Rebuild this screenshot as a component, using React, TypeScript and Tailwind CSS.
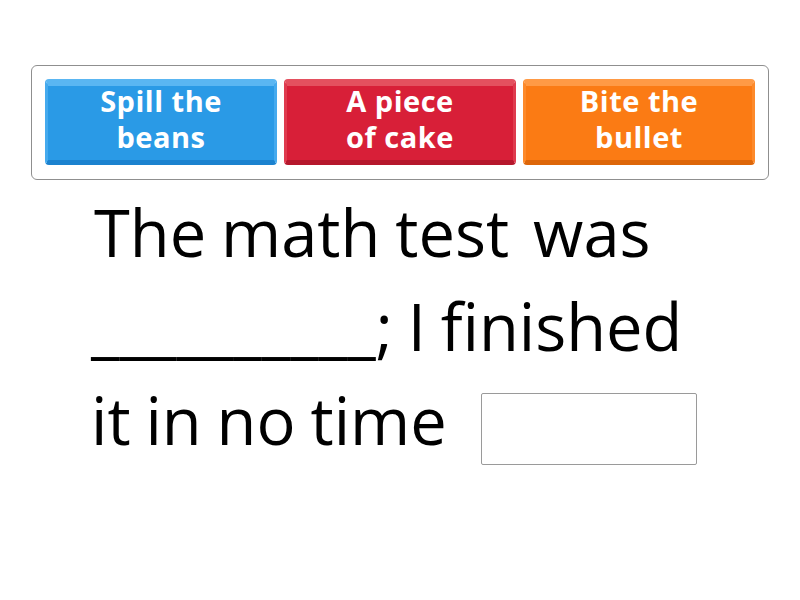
import React from "react";

const buttons = [
  { label: ["Spill the", "beans"], cls: "bg-[#2a9ae6] border-t-[#5ab6f2] border-l-[#45aaee] border-r-[#45aaee] border-b-[#1b82cf]" },
  { label: ["A piece", "of cake"], cls: "bg-[#d81f38] border-t-[#e4505f] border-l-[#df3b4f] border-r-[#df3b4f] border-b-[#b5172c]" },
  { label: ["Bite the", "bullet"], cls: "bg-[#fb7b14] border-t-[#ff9a45] border-l-[#fd8a2b] border-r-[#fd8a2b] border-b-[#dd6609]" },
];

export default function App() {
  return (
    <div className="w-[800px] h-[600px] bg-white font-['Open_Sans',sans-serif] overflow-hidden">
      <div className="pt-[65px] flex justify-center">
        <div className="w-[738px] h-[115px] border border-[#8f8f8f] rounded-[6px] px-[13px] pt-[13px] flex gap-[7px]">
          {buttons.map((b, i) => (
            <div
              key={i}
              className={`w-[232px] h-[86px] rounded-[4px] border-x-[3px] border-t-[7px] border-b-[5px] pb-[8px] flex items-center justify-center text-center text-white font-bold text-[29px] tracking-[0.5px] leading-[36px] ${b.cls}`}
            >
              <span>
                {b.label[0]}
                <br />
                {b.label[1]}
              </span>
            </div>
          ))}
        </div>
      </div>
      <div className="pl-[91px] pt-[5px] text-black text-[65px] leading-[94px] [word-spacing:-2px]">
        <div className="pl-[3px]">
          The math test<span className="ml-[24px]">was</span>
        </div>
        <div>__________; I finished</div>
        <div className="flex items-start">
          <span>it in no time</span>
          <span className="ml-[34px] mt-[20px] w-[216px] h-[72px] border border-[#9a9a9a] rounded-[2px] inline-block"></span>
        </div>
      </div>
    </div>
  );
}
